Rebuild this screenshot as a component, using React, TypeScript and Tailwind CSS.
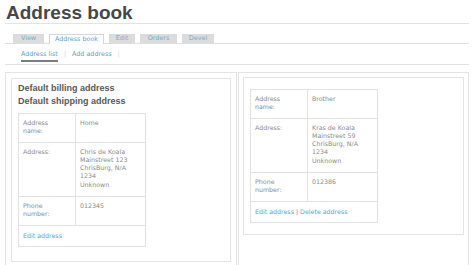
const tabs = [
  { label: "View", w: "w-[31px]" },
  { label: "Address book", w: "w-[55px]", active: true },
  { label: "Edit", w: "w-[26px]" },
  { label: "Orders", w: "w-[37px]" },
  { label: "Devel", w: "w-[32px]" },
];

type Address = {
  name: string;
  lines: string[];
  phone: string;
  canDelete?: boolean;
};

function AddressTable({ a }: { a: Address }) {
  const label = "w-[57px] border-r border-[#e2e2e2] px-[4px] pt-[5px] pb-[6px] align-top";
  const value = "px-[4px] pt-[5px] pb-[6px] align-top";
  return (
    <table className="w-[128px] border-collapse border border-[#e2e2e2] text-[6.3px] leading-[8.3px] text-[#8a8a8a]">
      <tbody>
        <tr className="border-b border-[#e2e2e2]">
          <td className={label}>
            Address
            <br />
            name:
          </td>
          <td className={value}>{a.name}</td>
        </tr>
        <tr className="border-b border-[#e2e2e2]">
          <td className={label + " pb-[7px]"}>Address:</td>
          <td className={value + " pb-[7px]"}>
            {a.lines.map((l) => (
              <div key={l}>{l}</div>
            ))}
          </td>
        </tr>
        <tr className="border-b border-[#e2e2e2]">
          <td className={label}>
            Phone
            <br />
            number:
          </td>
          <td className={value}>{a.phone}</td>
        </tr>
        <tr>
          <td colSpan={2} className="px-[4px] pt-[6px] pb-[6px] text-[#5aa3c8]">
            <a href="#">Edit address</a>
            {a.canDelete && (
              <>
                <span className="text-[#888]"> | </span>
                <a href="#">Delete address</a>
              </>
            )}
          </td>
        </tr>
      </tbody>
    </table>
  );
}

export default function App() {
  return (
    <div className="h-[265px] w-[474px] overflow-hidden bg-white font-['DejaVu_Sans',sans-serif]">
      <div className="ml-[5px] w-[464px]">
        <h1 className="border-b border-[#e3e3e3] pl-[1px] pt-[4px] pb-[1px] font-['Liberation_Sans',Arial,sans-serif] text-[19px] font-bold leading-[18px] text-[#474747]">
          Address book
        </h1>

        <ul className="mt-[10px] flex gap-[5px] border-b border-[#dedede] pl-[8px]">
          {tabs.map((t) =>
            t.active ? (
              <li
                key={t.label}
                className={`${t.w} -mb-px h-[10px] border border-b-0 border-[#d6d6d6] bg-white text-center text-[6.4px] leading-[9px] text-[#5aa3c8]`}
              >
                {t.label}
              </li>
            ) : (
              <li
                key={t.label}
                className={`${t.w} h-[9px] bg-[#dcdcdc] text-center text-[6.4px] leading-[9px] text-[#78abcb]`}
              >
                {t.label}
              </li>
            )
          )}
        </ul>

        <div className="flex items-start border-b border-[#e3e3e3] pl-[16px] pt-[6px] pb-[2px] text-[6.4px] leading-[9px] text-[#5aa3c8]">
          <span className="border-b-[2px] border-[#7d7d7d] pb-[1px]">Address list</span>
          <span className="mx-[6px] text-[#d6d6d6]">|</span>
          <span>Add address</span>
          <span className="mx-[6px] text-[#d6d6d6]">|</span>
        </div>

        <div className="mt-[7px] grid grid-cols-[232px_231px] gap-[1px]">
          <div className="h-[210px] border border-[#e4e4e4] p-[5px]">
            <div className="border border-[#e4e4e4] px-[6px] pt-[3px] pb-[14px]">
              <h2 className="font-['Liberation_Sans',Arial,sans-serif] text-[9px] font-bold leading-[13px] text-[#585858]">
                Default billing address
                <br />
                Default shipping address
              </h2>
              <div className="mt-[5px]">
                <AddressTable
                  a={{
                    name: "Home",
                    lines: ["Chris de Koala", "Mainstreet 123", "ChrisBurg, N/A", "1234", "Unknown"],
                    phone: "012345",
                  }}
                />
              </div>
            </div>
          </div>
          <div className="h-[210px] border border-[#e4e4e4] p-[4px]">
            <div className="border border-[#e4e4e4] px-[6px] pt-[11px] pb-[11px]">
              <AddressTable
                a={{
                  name: "Brother",
                  lines: ["Kras de Koala", "Mainstreet 59", "ChrisBurg, N/A", "1234", "Unknown"],
                  phone: "012386",
                  canDelete: true,
                }}
              />
            </div>
          </div>
        </div>
      </div>
    </div>
  );
}
